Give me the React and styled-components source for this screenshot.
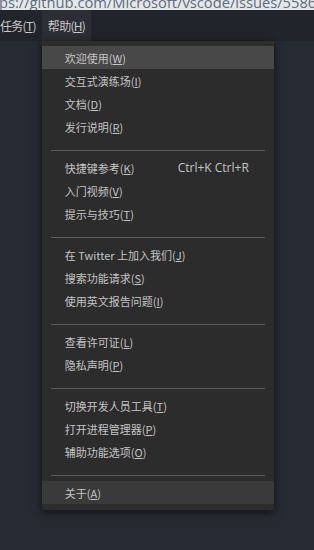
import React from 'react';
import styled, { createGlobalStyle } from 'styled-components';

const GlobalStyle = createGlobalStyle`
  html, body {
    margin: 0;
    padding: 0;
    background: #262a32;
  }
  body {
    font-family: "Open Sans", "Noto Sans CJK SC", sans-serif;
    overflow: hidden;
  }
`;

const Page = styled.div`
  width: 314px;
  height: 550px;
  background: #262a32;
  overflow: hidden;
`;

const UrlBar = styled.div`
  height: 10px;
  background: #e6e7e9;
  display: flex;
  align-items: flex-end;
  overflow: hidden;
  white-space: nowrap;
`;

const UrlText = styled.span`
  font-family: "Open Sans", sans-serif;
  font-size: 14.7px;
  line-height: 16px;
  color: #5d6b80;
  margin-bottom: 0;
  margin-left: -1px;
`;

const MenuBar = styled.div`
  height: 31px;
  background: #21242a;
  display: flex;
  align-items: stretch;
  margin-left: -6px;
`;

const BarItem = styled.div`
  position: relative;
  display: flex;
  align-items: center;
  padding: 0 6px;
  font-family: "Noto Sans CJK SC", sans-serif;
  font-size: 12px;
  letter-spacing: -0.7px;
  color: #c8c8c8;
  background: ${p => (p.open ? '#2b2e35' : 'transparent')};
`;

const Dropdown = styled.div`
  position: absolute;
  top: 100%;
  left: 0;
  width: 232px;
  padding: 5px 0 6px;
  background: #2c2c2c;
  box-shadow: 0 2px 8px rgba(0, 0, 0, 0.65);
  letter-spacing: normal;
  z-index: 10;
`;

const Item = styled.div`
  height: 23px;
  display: flex;
  align-items: center;
  padding: 0 25px 0 23px;
  background: ${p => (p.tone === 'active' ? '#484848' : p.tone === 'hover' ? '#3a3a3a' : 'transparent')};
  color: #c4c4c4;
  font-family: "Noto Sans CJK SC", sans-serif;
  font-size: 11px;
  white-space: nowrap;
`;

const Label = styled.span`
  flex: 1;
`;

const Key = styled.u`
  text-decoration: underline;
  text-underline-offset: 1px;
`;

const Shortcut = styled.span`
  font-family: "Open Sans", sans-serif;
  font-size: 12px;
  color: #c4c4c4;
`;

const Separator = styled.div`
  height: 1px;
  margin: 12px 9px 5px;
  background: #5c5c5c;
`;

const groups = [
  [
    { label: '欢迎使用', key: 'W', tone: 'active' },
    { label: '交互式演练场', key: 'I' },
    { label: '文档', key: 'D' },
    { label: '发行说明', key: 'R' },
  ],
  [
    { label: '快捷键参考', key: 'K', shortcut: 'Ctrl+K Ctrl+R' },
    { label: '入门视频', key: 'V' },
    { label: '提示与技巧', key: 'T' },
  ],
  [
    { label: '在 Twitter 上加入我们', key: 'J' },
    { label: '搜索功能请求', key: 'S' },
    { label: '使用英文报告问题', key: 'I' },
  ],
  [
    { label: '查看许可证', key: 'L' },
    { label: '隐私声明', key: 'P' },
  ],
  [
    { label: '切换开发人员工具', key: 'T' },
    { label: '打开进程管理器', key: 'P' },
    { label: '辅助功能选项', key: 'O' },
  ],
  [{ label: '关于', key: 'A', tone: 'hover' }],
];

const App = () => (
  <Page>
    <GlobalStyle />
    <UrlBar>
      <UrlText>ps://github.com/Microsoft/vscode/issues/5586</UrlText>
    </UrlBar>
    <MenuBar>
      <BarItem>
        任务(<Key>T</Key>)
      </BarItem>
      <BarItem open>
        帮助(<Key>H</Key>)
        <Dropdown>
          {groups.map((group, gi) => (
            <React.Fragment key={gi}>
              {gi > 0 && <Separator />}
              {group.map(item => (
                <Item key={item.label} tone={item.tone}>
                  <Label>
                    {item.label}(<Key>{item.key}</Key>)
                  </Label>
                  {item.shortcut && <Shortcut>{item.shortcut}</Shortcut>}
                </Item>
              ))}
            </React.Fragment>
          ))}
        </Dropdown>
      </BarItem>
    </MenuBar>
  </Page>
);

export default App;
